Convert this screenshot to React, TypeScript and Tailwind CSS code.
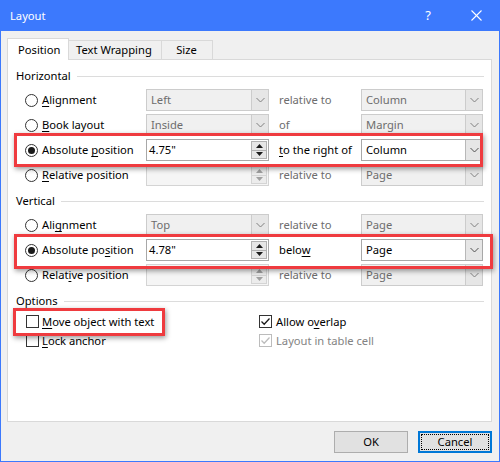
import React from "react";

const U = ({ children }: { children: React.ReactNode }) => (
  <span className="underline underline-offset-[2px] decoration-1">{children}</span>
);

const Radio = ({ checked }: { checked?: boolean }) => (
  <span className="w-[13px] h-[13px] rounded-full border border-[#333333] bg-white flex items-center justify-center shrink-0">
    {checked && <span className="w-[7px] h-[7px] rounded-full bg-[#1a1a1a]" />}
  </span>
);

const Checkbox = ({ checked, disabled }: { checked?: boolean; disabled?: boolean }) => (
  <span
    className={
      "w-[13px] h-[13px] border bg-white flex items-center justify-center shrink-0 " +
      (disabled ? "border-[#bcbcbc]" : "border-[#333333]")
    }
  >
    {checked && (
      <svg width="11" height="11" viewBox="0 0 11 11">
        <polyline
          points="1.5,5.5 4.2,8.2 9.5,2.5"
          fill="none"
          stroke={disabled ? "#bcbcbc" : "#1a1a1a"}
          strokeWidth="1.3"
        />
      </svg>
    )}
  </span>
);

const Chevron = ({ color }: { color: string }) => (
  <svg width="9" height="6" viewBox="0 0 9 6">
    <polyline points="0.5,1 4.5,5 8.5,1" fill="none" stroke={color} strokeWidth="1" />
  </svg>
);

const Combo = ({ value, enabled, w = "w-[122px]" }: { value: string; enabled?: boolean; w?: string }) => (
  <div
    className={
      w +
      " h-[22px] flex border " +
      (enabled ? "border-[#a8a8a8] bg-white text-black" : "border-[#cccccc] bg-[#f0f0f0] text-[#6d6d6d]")
    }
  >
    <div className="flex-1 flex items-center pl-[4px] leading-none">{value}</div>
    <div
      className={
        "w-[17px] h-full border-l flex items-center justify-center " +
        (enabled ? "border-[#b8b8b8] bg-[#e6e6e6]" : "border-[#cccccc] bg-[#e6e6e6]")
      }
    >
      <Chevron color={enabled ? "#505050" : "#808080"} />
    </div>
  </div>
);

const Arrow = ({ up, color }: { up?: boolean; color: string }) => (
  <svg width="7" height="4" viewBox="0 0 7 4">
    <polygon points={up ? "0,4 3.5,0 7,4" : "0,0 3.5,4 7,0"} fill={color} />
  </svg>
);

const Spin = ({ value, enabled }: { value?: string; enabled?: boolean }) => {
  const ac = enabled ? "#1a1a1a" : "#a0a0a0";
  return (
    <div
      className={
        "w-[123px] h-[22px] flex border " +
        (enabled ? "border-[#a8a8a8] bg-white text-black" : "border-[#d4d4d4] bg-[#f5f5f5] text-[#6d6d6d]")
      }
    >
      <div className="flex-1 flex items-center pl-[2px] leading-none">{value}</div>
      <div className="w-[17px] h-full py-[1px] pr-[1px] flex flex-col">
        <div
          className={
            "flex-1 flex items-center justify-center border " +
            (enabled ? "border-[#b0b0b0] bg-[#e6e6e6]" : "border-[#d4d4d4] bg-[#ececec]")
          }
        >
          <Arrow up color={ac} />
        </div>
        <div
          className={
            "flex-1 flex items-center justify-center border border-t-0 " +
            (enabled ? "border-[#b0b0b0] bg-[#e6e6e6]" : "border-[#d4d4d4] bg-[#ececec]")
          }
        >
          <Arrow color={ac} />
        </div>
      </div>
    </div>
  );
};

const Header = ({ children }: { children: React.ReactNode }) => (
  <div className="h-[16px] flex items-center pr-[7px]">
    <span className="leading-none">{children}</span>
    <div className="flex-1 h-px bg-[#dcdcdc] ml-[6px]" />
  </div>
);

type RowProps = {
  checked?: boolean;
  label: React.ReactNode;
  field: React.ReactNode;
  mid: React.ReactNode;
  midEnabled?: boolean;
  combo: React.ReactNode;
};

const Row = ({ checked, label, field, mid, midEnabled, combo }: RowProps) => (
  <div className="h-[22px] flex items-center">
    <div className="w-[130px] flex items-center pl-[9px]">
      <Radio checked={checked} />
      <span className="ml-[4px] leading-none whitespace-nowrap">{label}</span>
    </div>
    {field}
    <div
      className={
        "w-[92px] pl-[10px] leading-none whitespace-nowrap " + (midEnabled ? "text-black" : "text-[#6d6d6d]")
      }
    >
      {mid}
    </div>
    {combo}
  </div>
);

export default function App() {
  return (
    <div className="relative w-[500px] h-[462px] bg-[#f0f0f0] border-x border-b border-[#3c79fd] flex flex-col text-[11.2px] text-black font-['Noto_Sans',sans-serif] overflow-hidden">
      {/* Title bar */}
      <div className="h-[31px] bg-[#3c79fd] flex items-center text-white shrink-0">
        <span className="ml-[9px] leading-none">Layout</span>
        <span className="ml-auto mr-[40px] text-[13px] leading-none">?</span>
        <svg width="11" height="11" viewBox="0 0 11 11" className="mr-[17px]">
          <line x1="0.5" y1="0.5" x2="10.5" y2="10.5" stroke="white" strokeWidth="1.1" />
          <line x1="10.5" y1="0.5" x2="0.5" y2="10.5" stroke="white" strokeWidth="1.1" />
        </svg>
      </div>

      {/* Tabs */}
      <div className="mt-[7px] ml-[6px] h-[21px] flex items-end">
        <div className="relative z-10 w-[62px] h-[22px] -mb-px bg-white border-t border-x border-[#d9d9d9] flex items-center pl-[10px] leading-none">
          Position
        </div>
        <div className="w-[94px] h-[19px] -ml-px border-t border-r border-[#d9d9d9] flex items-center pl-[8px] leading-none">
          Text Wrapping
        </div>
        <div className="w-[52px] h-[19px] -ml-px border-t border-r border-[#d9d9d9] flex items-center justify-center leading-none">
          Size
        </div>
      </div>

      {/* Panel */}
      <div className="ml-[6px] w-[485px] h-[363px] bg-white border border-[#d9d9d9] pl-[8px] pt-[8px] flex flex-col shrink-0">
        <Header>Horizontal</Header>
        <div className="mt-[5px] flex flex-col gap-[3px]">
          <Row
            label={<><U>A</U>lignment</>}
            field={<Combo value="Left" w="w-[123px]" />}
            mid="relative to"
            combo={<Combo value="Column" />}
          />
          <Row
            label={<><U>B</U>ook layout</>}
            field={<Combo value="Inside" w="w-[123px]" />}
            mid="of"
            combo={<Combo value="Margin" />}
          />
          <Row
            checked
            label={<>Absolute <U>p</U>osition</>}
            field={<Spin value={"4.75\""} enabled />}
            mid={<><U>t</U>o the right of</>}
            midEnabled
            combo={<Combo value="Column" enabled />}
          />
          <Row
            label={<><U>R</U>elative position</>}
            field={<Spin />}
            mid="relative to"
            combo={<Combo value="Page" />}
          />
        </div>

        <div className="mt-[7px]">
          <Header>Vertical</Header>
        </div>
        <div className="mt-[5px] flex flex-col gap-[3px]">
          <Row
            label={<>Ali<U>g</U>nment</>}
            field={<Combo value="Top" w="w-[123px]" />}
            mid="relative to"
            combo={<Combo value="Page" />}
          />
          <Row
            checked
            label={<>Absolute po<U>s</U>ition</>}
            field={<Spin value={"4.78\""} enabled />}
            mid={<>belo<U>w</U></>}
            midEnabled
            combo={<Combo value="Page" enabled />}
          />
          <Row
            label={<>Relat<U>i</U>ve position</>}
            field={<Spin />}
            mid="relative to"
            combo={<Combo value="Page" />}
          />
        </div>

        <div className="mt-[7px]">
          <Header>Options</Header>
        </div>
        <div className="mt-[6px] pl-[10px] flex">
          <div className="w-[233px] flex flex-col gap-[6px]">
            <div className="h-[13px] flex items-center">
              <Checkbox />
              <span className="ml-[3px] leading-none"><U>M</U>ove object with text</span>
            </div>
            <div className="h-[13px] flex items-center">
              <Checkbox />
              <span className="ml-[3px] leading-none"><U>L</U>ock anchor</span>
            </div>
          </div>
          <div className="flex flex-col gap-[6px]">
            <div className="h-[13px] flex items-center">
              <Checkbox checked />
              <span className="ml-[4px] leading-none">Allow o<U>v</U>erlap</span>
            </div>
            <div className="h-[13px] flex items-center text-[#838383]">
              <Checkbox checked disabled />
              <span className="ml-[4px] leading-none">Layout in table cell</span>
            </div>
          </div>
        </div>
      </div>

      {/* Footer buttons */}
      <div className="mt-[9px] pr-[7px] flex justify-end gap-[10px]">
        <button className="w-[74px] h-[22px] bg-[#e1e1e1] border border-[#adadad] leading-none">OK</button>
        <button className="w-[74px] h-[22px] bg-[#e1e1e1] border-2 border-[#0078d7] p-[1px] leading-none">
          <span className="w-full h-full flex items-center justify-center border border-dotted border-black">Cancel</span>
        </button>
      </div>

      {/* Red highlight boxes */}
      <div className="absolute left-[13px] top-[133px] w-[469px] h-[34px] border-[3px] border-[#ef3b3f] shadow-[1px_2px_5px_rgba(0,0,0,0.4)] pointer-events-none" />
      <div className="absolute left-[13px] top-[234px] w-[479px] h-[35px] border-[3px] border-[#ef3b3f] shadow-[1px_2px_5px_rgba(0,0,0,0.4)] pointer-events-none" />
      <div className="absolute left-[12px] top-[308px] w-[152px] h-[28px] border-[3px] border-[#ef3b3f] shadow-[1px_2px_5px_rgba(0,0,0,0.4)] pointer-events-none" />
    </div>
  );
}
